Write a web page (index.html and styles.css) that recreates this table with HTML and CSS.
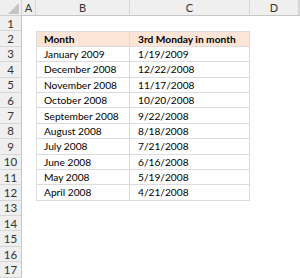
FILE: index.html
```
<!DOCTYPE html>
<html>
<head>
<meta charset="utf-8">
<link rel="stylesheet" href="styles.css">
</head>
<body>
<div class="sheet">
  <div class="corner"><svg width="21" height="16" viewBox="0 0 21 16"><polygon points="19,4 19,15 8,15" fill="#c4c4c4"/></svg></div>
  <div class="colh">A</div><div class="colh">B</div><div class="colh">C</div><div class="colh">D</div><div class="colh"></div>

  <div class="rowh">1</div><div class="c"></div><div class="c"></div><div class="c"></div><div class="c"></div><div class="c"></div>

  <div class="rowh">2</div><div class="c"></div><div class="t th tl tt">Month</div><div class="t th tt">3rd Monday in month</div><div class="c"></div><div class="c"></div>

  <div class="rowh">3</div><div class="c"></div><div class="t tl">January 2009</div><div class="t">1/19/2009</div><div class="c"></div><div class="c"></div>
  <div class="rowh">4</div><div class="c"></div><div class="t tl">December 2008</div><div class="t">12/22/2008</div><div class="c"></div><div class="c"></div>
  <div class="rowh">5</div><div class="c"></div><div class="t tl">November 2008</div><div class="t">11/17/2008</div><div class="c"></div><div class="c"></div>
  <div class="rowh">6</div><div class="c"></div><div class="t tl">October 2008</div><div class="t">10/20/2008</div><div class="c"></div><div class="c"></div>
  <div class="rowh">7</div><div class="c"></div><div class="t tl">September 2008</div><div class="t">9/22/2008</div><div class="c"></div><div class="c"></div>
  <div class="rowh">8</div><div class="c"></div><div class="t tl">August 2008</div><div class="t">8/18/2008</div><div class="c"></div><div class="c"></div>
  <div class="rowh">9</div><div class="c"></div><div class="t tl">July 2008</div><div class="t">7/21/2008</div><div class="c"></div><div class="c"></div>
  <div class="rowh">10</div><div class="c"></div><div class="t tl">June 2008</div><div class="t">6/16/2008</div><div class="c"></div><div class="c"></div>
  <div class="rowh">11</div><div class="c"></div><div class="t tl">May 2008</div><div class="t">5/19/2008</div><div class="c"></div><div class="c"></div>
  <div class="rowh">12</div><div class="c"></div><div class="t tl">April 2008</div><div class="t">4/21/2008</div><div class="c"></div><div class="c"></div>

  <div class="rowh">13</div><div class="c"></div><div class="c"></div><div class="c"></div><div class="c"></div><div class="c"></div>
  <div class="rowh">14</div><div class="c"></div><div class="c"></div><div class="c"></div><div class="c"></div><div class="c"></div>
  <div class="rowh">15</div><div class="c"></div><div class="c"></div><div class="c"></div><div class="c"></div><div class="c"></div>
  <div class="rowh">16</div><div class="c"></div><div class="c"></div><div class="c"></div><div class="c"></div><div class="c"></div>
  <div class="rowh">17</div><div class="c"></div><div class="c"></div><div class="c"></div><div class="c"></div><div class="c"></div>
</div>
</body>
</html>
```
FILE: styles.css
```
html, body {
  margin: 0;
  padding: 0;
  background: #ffffff;
  overflow: hidden;
}

.sheet {
  display: grid;
  grid-template-columns: 22px 14px 94px 120px 49px 1fr;
  grid-template-rows: 16px;
  grid-auto-rows: 15.4px;
  width: 300px;
  height: 278px;
  font-family: Lato, "Liberation Sans", sans-serif;
  font-size: 10.2px;
  color: #000000;
}

.corner {
  background: #efefef;
  border-right: 1px solid #cfcfcf;
  border-bottom: 1px solid #cfcfcf;
  box-sizing: border-box;
  line-height: 0;
}

.corner svg {
  display: block;
  margin: -1px 0 0 0;
}

.colh {
  background: #efefef;
  border-right: 1px solid #d6d6d6;
  border-bottom: 1px solid #c6c6c6;
  box-sizing: border-box;
  display: flex;
  align-items: center;
  justify-content: center;
  color: #333333;
  font-size: 11px;
}

.rowh {
  background: #efefef;
  border-right: 1px solid #c6c6c6;
  border-bottom: 1px solid #d6d6d6;
  box-sizing: border-box;
  display: flex;
  align-items: center;
  justify-content: center;
  color: #333333;
  font-size: 11.5px;
}

.c {
  background: #ffffff;
}

.t {
  box-sizing: border-box;
  border-right: 1px solid #dcdcdc;
  border-bottom: 1px solid #dcdcdc;
  display: flex;
  align-items: center;
  padding-left: 8px;
  white-space: nowrap;
  background: #ffffff;
}

.tl {
  border-left: 1px solid #dcdcdc;
  padding-left: 7px;
}

.tt {
  border-top: 1px solid #dcdcdc;
}

.th {
  background: #fce4d6;
  font-weight: 700;
}
```
